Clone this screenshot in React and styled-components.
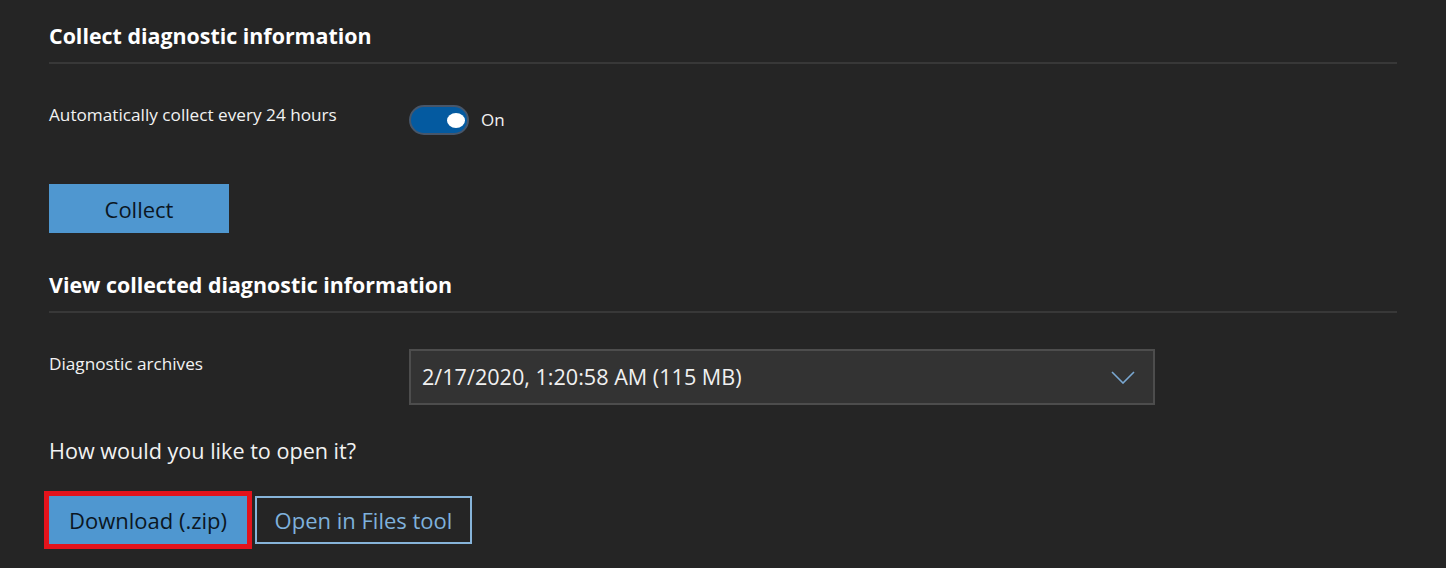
import React from "react";
import styled, { createGlobalStyle } from "styled-components";

const Global = createGlobalStyle`
  html, body { margin: 0; padding: 0; background: #252525; }
  body { font-family: "Open Sans", "Noto Sans", sans-serif; color: #ffffff; }
  * { box-sizing: border-box; }
`;

const Page = styled.div`
  width: 1446px;
  height: 568px;
  overflow: hidden;
  padding: 22px 49px 0 49px;
  display: flex;
  flex-direction: column;
`;

const SectionTitle = styled.h2`
  margin: 0;
  font-size: 21.4px;
  line-height: 28px;
  font-weight: 700;
  color: #ffffff;
  padding-bottom: 12px;
  border-bottom: 2px solid #383838;
  margin-top: ${(p) => p.$top || 0}px;
`;

const Row = styled.div`
  display: flex;
  align-items: flex-start;
  margin-top: ${(p) => p.$top || 0}px;
`;

const Label = styled.div`
  width: 360px;
  flex: none;
  font-size: 17.2px;
  line-height: 24px;
  color: #f2f2f2;
  margin-top: ${(p) => p.$top || 0}px;
`;

const ToggleGroup = styled.div`
  display: flex;
  align-items: center;
  gap: 12px;
  margin-top: 2px;
`;

const Track = styled.div`
  width: 60px;
  height: 30px;
  border-radius: 15px;
  background: #045aa0;
  border: 2px solid #47566a;
  display: flex;
  align-items: center;
  justify-content: flex-end;
  padding-right: 2px;
`;

const Knob = styled.div`
  width: 18px;
  height: 15px;
  border-radius: 50%;
  background: #ffffff;
`;

const StateText = styled.span`
  font-size: 17px;
  line-height: 24px;
  color: #f2f2f2;
`;

const Button = styled.button`
  font-family: "Open Sans", "Noto Sans", sans-serif;
  font-size: 22px;
  line-height: 30px;
  height: ${(p) => p.$h || 48}px;
  width: ${(p) => p.$w}px;
  padding: 0;
  border: ${(p) => (p.$primary ? "none" : "2px solid #87b4da")};
  background: ${(p) => (p.$primary ? "#4f97d0" : "transparent")};
  color: ${(p) => (p.$primary ? "#0b1622" : "#7fb1dc")};
  display: flex;
  align-items: center;
  justify-content: center;
  outline: ${(p) => (p.$highlight ? "5px solid #e3131c" : "none")};
  cursor: pointer;
`;

const CollectWrap = styled.div`
  margin-top: 49px;
  display: flex;
`;

const Select = styled.div`
  width: 746px;
  height: 56px;
  background: #333333;
  border: 2px solid #4d4d4d;
  display: flex;
  align-items: center;
  justify-content: space-between;
  padding: 0 18px 0 11px;
  font-size: 21.6px;
  line-height: 30px;
  color: #f0f0f0;
`;

const Question = styled.div`
  margin-top: 31px;
  font-size: 21.6px;
  line-height: 30px;
  color: #f2f2f2;
`;

const Actions = styled.div`
  margin-top: 30px;
  display: flex;
  align-items: flex-start;
  gap: 8px;
`;

const Chevron = () => (
  <svg width="24" height="13" viewBox="0 0 24 13" fill="none">
    <polyline points="1,1 12,12 23,1" stroke="#7aa8d2" strokeWidth="1.6" />
  </svg>
);

export default function App() {
  return (
    <>
      <Global />
      <Page>
        <SectionTitle>Collect diagnostic information</SectionTitle>
        <Row $top={39}>
          <Label>Automatically collect every 24 hours</Label>
          <ToggleGroup>
            <Track>
              <Knob />
            </Track>
            <StateText>On</StateText>
          </ToggleGroup>
        </Row>
        <CollectWrap>
          <Button $primary $w={180} $h={49}>Collect</Button>
        </CollectWrap>
        <SectionTitle $top={38}>View collected diagnostic information</SectionTitle>
        <Row $top={36}>
          <Label $top={3}>Diagnostic archives</Label>
          <Select>
            <span>2/17/2020, 1:20:58 AM (115 MB)</span>
            <Chevron />
          </Select>
        </Row>
        <Question>How would you like to open it?</Question>
        <Actions>
          <Button $primary $highlight $w={198}>Download (.zip)</Button>
          <Button $w={217}>Open in Files tool</Button>
        </Actions>
      </Page>
    </>
  );
}
